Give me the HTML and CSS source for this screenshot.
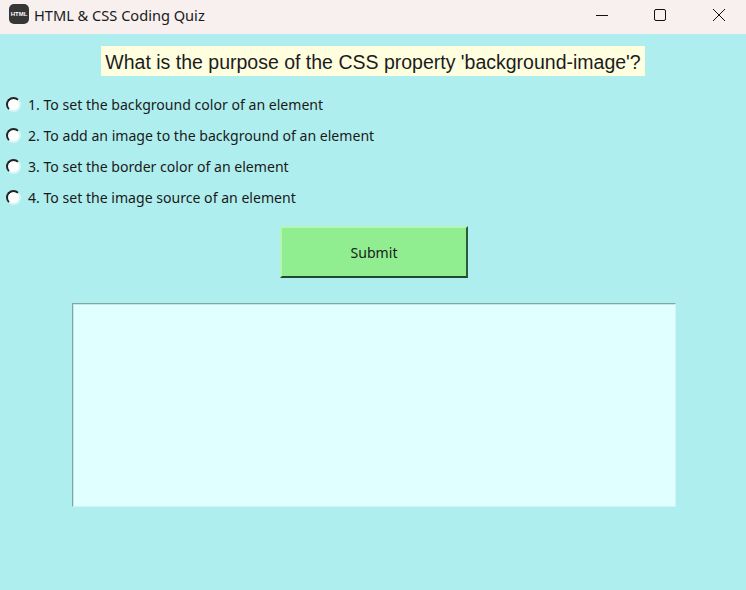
FILE: index.html
```html
<!DOCTYPE html>
<html lang="en">
<head>
<meta charset="utf-8">
<title>HTML &amp; CSS Coding Quiz</title>
<link rel="stylesheet" href="styles.css">
</head>
<body>
<div class="window">
  <header class="titlebar">
    <div class="app-icon">HTML</div>
    <div class="app-title">HTML &amp; CSS Coding Quiz</div>
    <div class="controls">
      <div class="control">
        <svg width="12" height="12" viewBox="0 0 12 12"><path d="M0 6.5H12" stroke="#111" fill="none"/></svg>
      </div>
      <div class="control">
        <svg width="12" height="12" viewBox="0 0 12 12"><rect x="0.5" y="0.5" width="11" height="11" rx="1.5" stroke="#111" fill="none"/></svg>
      </div>
      <div class="control control-close">
        <svg width="12" height="12" viewBox="0 0 12 12"><path d="M0 0L12 12M12 0L0 12" stroke="#111" fill="none"/></svg>
      </div>
    </div>
  </header>
  <main class="content">
    <h1 class="question">What is the purpose of the CSS property 'background-image'?</h1>
    <ul class="options">
      <li class="option"><span class="radio"></span><span>1. To set the background color of an element</span></li>
      <li class="option"><span class="radio"></span><span>2. To add an image to the background of an element</span></li>
      <li class="option"><span class="radio"></span><span>3. To set the border color of an element</span></li>
      <li class="option"><span class="radio"></span><span>4. To set the image source of an element</span></li>
    </ul>
    <button class="submit" type="button">Submit</button>
    <div class="output"></div>
  </main>
</div>
</body>
</html>
```
FILE: styles.css
```css
* { box-sizing: border-box; }
html, body { margin: 0; padding: 0; height: 100%; }
body { background: #afeeee; overflow: hidden; }
.window { width: 746px; height: 590px; display: flex; flex-direction: column; }
.titlebar {
  height: 34px;
  background: #f7f0ef;
  display: flex;
  align-items: flex-start;
  padding-left: 9px;
  flex: none;
}
.app-icon {
  width: 20px;
  height: 20px;
  margin-top: 4px;
  border-radius: 5px;
  background: #363636;
  color: #fff;
  font: bold 6px/20px "Liberation Sans", sans-serif;
  text-align: center;
  flex: none;
}
.app-title {
  margin-left: 5px;
  font: 14.6px/30px "Noto Sans", sans-serif;
  color: #1a1a1a;
  flex: 1;
}
.controls { display: flex; gap: 4px; }
.control {
  width: 54px;
  height: 30px;
  display: flex;
  align-items: center;
  justify-content: center;
}
.control-close { margin-left: 1px; }
.content {
  flex: 1;
  display: flex;
  flex-direction: column;
  align-items: center;
  padding-top: 12px;
}
.question {
  margin: 0;
  height: 30px;
  padding: 0 4px;
  background: #ffffe0;
  font: normal 19.5px/32px "Liberation Sans", sans-serif;
  color: #1c1c1c;
  white-space: nowrap;
}
.options {
  list-style: none;
  margin: 14px 0 0;
  padding: 0;
  width: 100%;
  display: flex;
  flex-direction: column;
}
.option {
  height: 31px;
  display: flex;
  align-items: center;
  padding: 0 0 2px 6px;
  font: 14.08px "Noto Sans", sans-serif;
  color: #1a1a1a;
}
.radio {
  width: 15px;
  height: 15px;
  margin-right: 7px;
  border-radius: 50%;
  background: #fff;
  border: 2px solid #d8f6f6;
  border-top-color: #222;
  border-left-color: #222;
  flex: none;
}
.submit {
  display: block;
  margin: 12px 0 0 2px;
  width: 188px;
  height: 52px;
  background: #90ee90;
  border: 2px solid;
  border-color: #b4f4b4 #2c5a3c #1f4a30 #b4f4b4;
  padding: 0;
  font: 14.08px "Noto Sans", sans-serif;
  color: #1a1a1a;
}
.output {
  margin: 25px 0 0 2px;
  width: 604px;
  height: 204px;
  background: #e0ffff;
  border: 1px solid;
  border-color: #7fa5a5 #d0f4f4 #d0f4f4 #7fa5a5;
  box-shadow: inset 1px 1px 0 #c4e6e6;
}
```
